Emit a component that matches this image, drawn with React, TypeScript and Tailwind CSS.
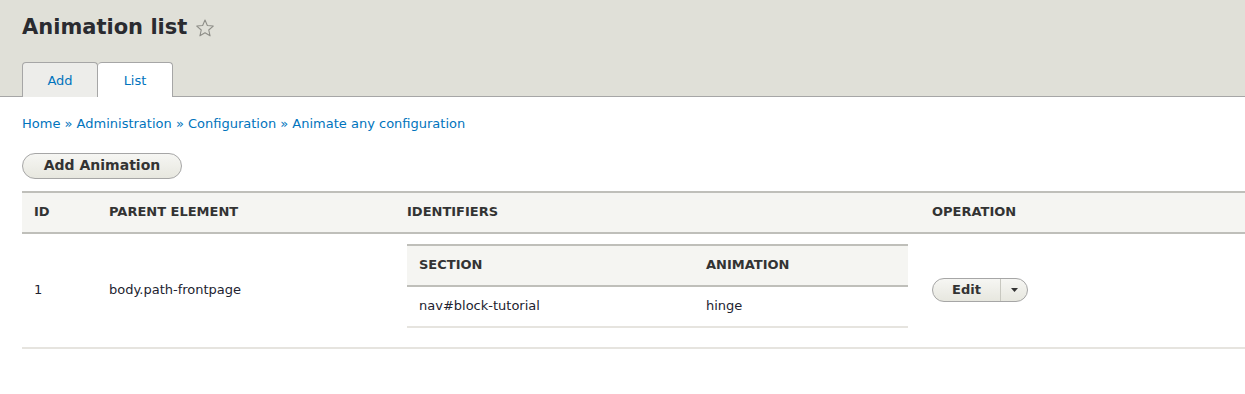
import type { JSX } from 'react'

const font = { fontFamily: '"DejaVu Sans", Verdana, sans-serif' }

function Star(): JSX.Element {
  return (
    <svg width="20" height="20" viewBox="0 0 24 24" className="ml-2 mt-[2px]">
      <path
        d="M12 2.5l2.8 6.6 7.1.6-5.4 4.7 1.6 7-6.1-3.7-6.1 3.7 1.6-7-5.4-4.7 7.1-.6z"
        fill="none"
        stroke="#8e8e88"
        strokeWidth="1.3"
        strokeLinejoin="round"
      />
    </svg>
  )
}

const btn =
  'rounded-full border border-[#a6a6a6] bg-gradient-to-b from-[#f6f6f3] to-[#e7e7df] font-bold text-[#333]'

export default function App(): JSX.Element {
  const crumbs = ['Home', 'Administration', 'Configuration', 'Animate any configuration']
  return (
    <div style={font} className="min-h-[394px] bg-white text-[13px] text-[#222330]">
      <header className="border-b border-[#a6a6a6] bg-[#e0e0d8] px-[22px] pt-[14px]">
        <div className="flex items-center">
          <h1 className="text-[21px] font-bold leading-[26px] text-[#2a2b30]">Animation list</h1>
          <Star />
        </div>
        <nav className="mt-[22px] flex h-[35px] -mb-px">
          <a className="flex w-[76px] items-center justify-center rounded-t-[4px] border border-[#a6a6a6] border-b-0 bg-[#ededea] pt-px text-[#0074bd]">
            Add
          </a>
          <a className="flex w-[75px] items-center justify-center rounded-t-[4px] border border-l-0 border-[#a6a6a6] border-b-0 bg-white pt-px text-[#0074bd]">
            List
          </a>
        </nav>
      </header>

      <main className="pl-[22px]">
        <div className="mt-[17px] text-[#0074bd]">
          {crumbs.map((c, i) => (
            <span key={c}>
              {i > 0 && <span> » </span>}
              <a>{c}</a>
            </span>
          ))}
        </div>

        <button type="button" className={`${btn} mt-[19px] h-[26px] w-[160px] text-[14px]`}>
          Add Animation
        </button>

        <table className="mt-[12px] w-[1223px] table-fixed border-collapse">
          <colgroup>
            <col className="w-[75px]" />
            <col className="w-[298px]" />
            <col className="w-[525px]" />
            <col />
          </colgroup>
          <thead>
            <tr className="h-[41px] border-y-2 border-[#bfbfba] bg-[#f5f5f2] text-left text-[13px] font-bold uppercase text-[#333]">
              <th className="px-3">ID</th>
              <th className="px-3">Parent element</th>
              <th className="px-3">Identifiers</th>
              <th className="px-3">Operation</th>
            </tr>
          </thead>
          <tbody>
            <tr className="border-b-2 border-[#e6e4df] align-middle">
              <td className="px-3">1</td>
              <td className="px-3">body.path-frontpage</td>
              <td className="px-3 pt-[10px] pb-[19px]">
                <table className="w-full table-fixed border-collapse">
                  <colgroup>
                    <col className="w-[287px]" />
                    <col />
                  </colgroup>
                  <thead>
                    <tr className="h-[41px] border-y-2 border-[#bfbfba] bg-[#f5f5f2] text-left text-[13px] font-bold uppercase text-[#333]">
                      <th className="px-3">Section</th>
                      <th className="px-3">Animation</th>
                    </tr>
                  </thead>
                  <tbody>
                    <tr className="h-[41px] border-b-2 border-[#e6e4df]">
                      <td className="px-3">nav#block-tutorial</td>
                      <td className="px-3">hinge</td>
                    </tr>
                  </tbody>
                </table>
              </td>
              <td className="px-3">
                <div className="flex">
                  <div className={`${btn} flex h-[24px] w-[96px] overflow-hidden`}>
                    <span className="flex w-[68px] items-center justify-center border-r border-[#c8c8c0] text-[13px]">
                      Edit
                    </span>
                    <span className="flex flex-1 items-center justify-center">
                      <svg width="7" height="4" viewBox="0 0 7 4">
                        <path d="M0 0h7L3.5 4z" fill="#333" />
                      </svg>
                    </span>
                  </div>
                </div>
              </td>
            </tr>
          </tbody>
        </table>
      </main>
    </div>
  )
}
